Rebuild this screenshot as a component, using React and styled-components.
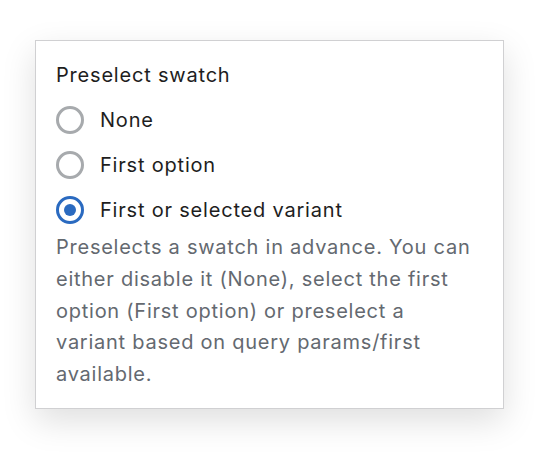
import React from 'react'
import styled, { createGlobalStyle } from 'styled-components'

const GlobalStyle = createGlobalStyle`
  html, body {
    margin: 0;
    padding: 0;
    background: #ffffff;
  }
  body {
    font-family: Inter, "Noto Sans", "Liberation Sans", sans-serif;
    -webkit-font-smoothing: antialiased;
  }
`

const Page = styled.div`
  width: 548px;
  height: 458px;
  padding: 40px 0 0 35px;
  box-sizing: border-box;
`

const Card = styled.div`
  width: 469px;
  height: 369px;
  box-sizing: border-box;
  background: #fff;
  border: 1px solid #d0d0d2;
  box-shadow: 0 12px 32px rgba(0, 0, 0, 0.13);
  padding: 20px 20px 0 20px;
`

const Title = styled.div`
  font-size: 20px;
  letter-spacing: 0.8px;
  color: #1e1e1e;
  line-height: 28px;
  margin-bottom: 17px;
`

const Options = styled.div`
  display: flex;
  flex-direction: column;
  gap: 17px;
`

const Option = styled.label`
  display: flex;
  align-items: center;
  gap: 16px;
  font-size: 20px;
  letter-spacing: 0.8px;
  color: #1e1e1e;
  height: 28px;
`

const Circle = styled.span`
  width: 28px;
  height: 28px;
  flex: none;
  box-sizing: border-box;
  border-radius: 50%;
  border: ${(p) => (p.$checked ? '3.5px solid #2a6ac0' : '3px solid #a7aaad')};
  display: flex;
  align-items: center;
  justify-content: center;
  &::after {
    content: '';
    display: ${(p) => (p.$checked ? 'block' : 'none')};
    width: 12px;
    height: 12px;
    border-radius: 50%;
    background: #2a6ac0;
  }
`

const Help = styled.p`
  margin: 8px 0 0 0;
  font-size: 20px;
  letter-spacing: 0.75px;
  line-height: 31.8px;
  color: #646970;
`

const options = [
  { id: 'none', label: 'None' },
  { id: 'first', label: 'First option' },
  { id: 'variant', label: 'First or selected variant' },
]

const App = () => {
  const selected = 'variant'
  return (
    <Page>
      <GlobalStyle />
      <Card>
        <Title>Preselect swatch</Title>
        <Options>
          {options.map((o) => (
            <Option key={o.id}>
              <Circle $checked={o.id === selected} />
              {o.label}
            </Option>
          ))}
        </Options>
        <Help>
          Preselects a swatch in advance. You can
          <br />
          either disable it (None), select the first
          <br />
          option (First option) or preselect a
          <br />
          variant based on query params/first
          <br />
          available.
        </Help>
      </Card>
    </Page>
  )
}

export default App
